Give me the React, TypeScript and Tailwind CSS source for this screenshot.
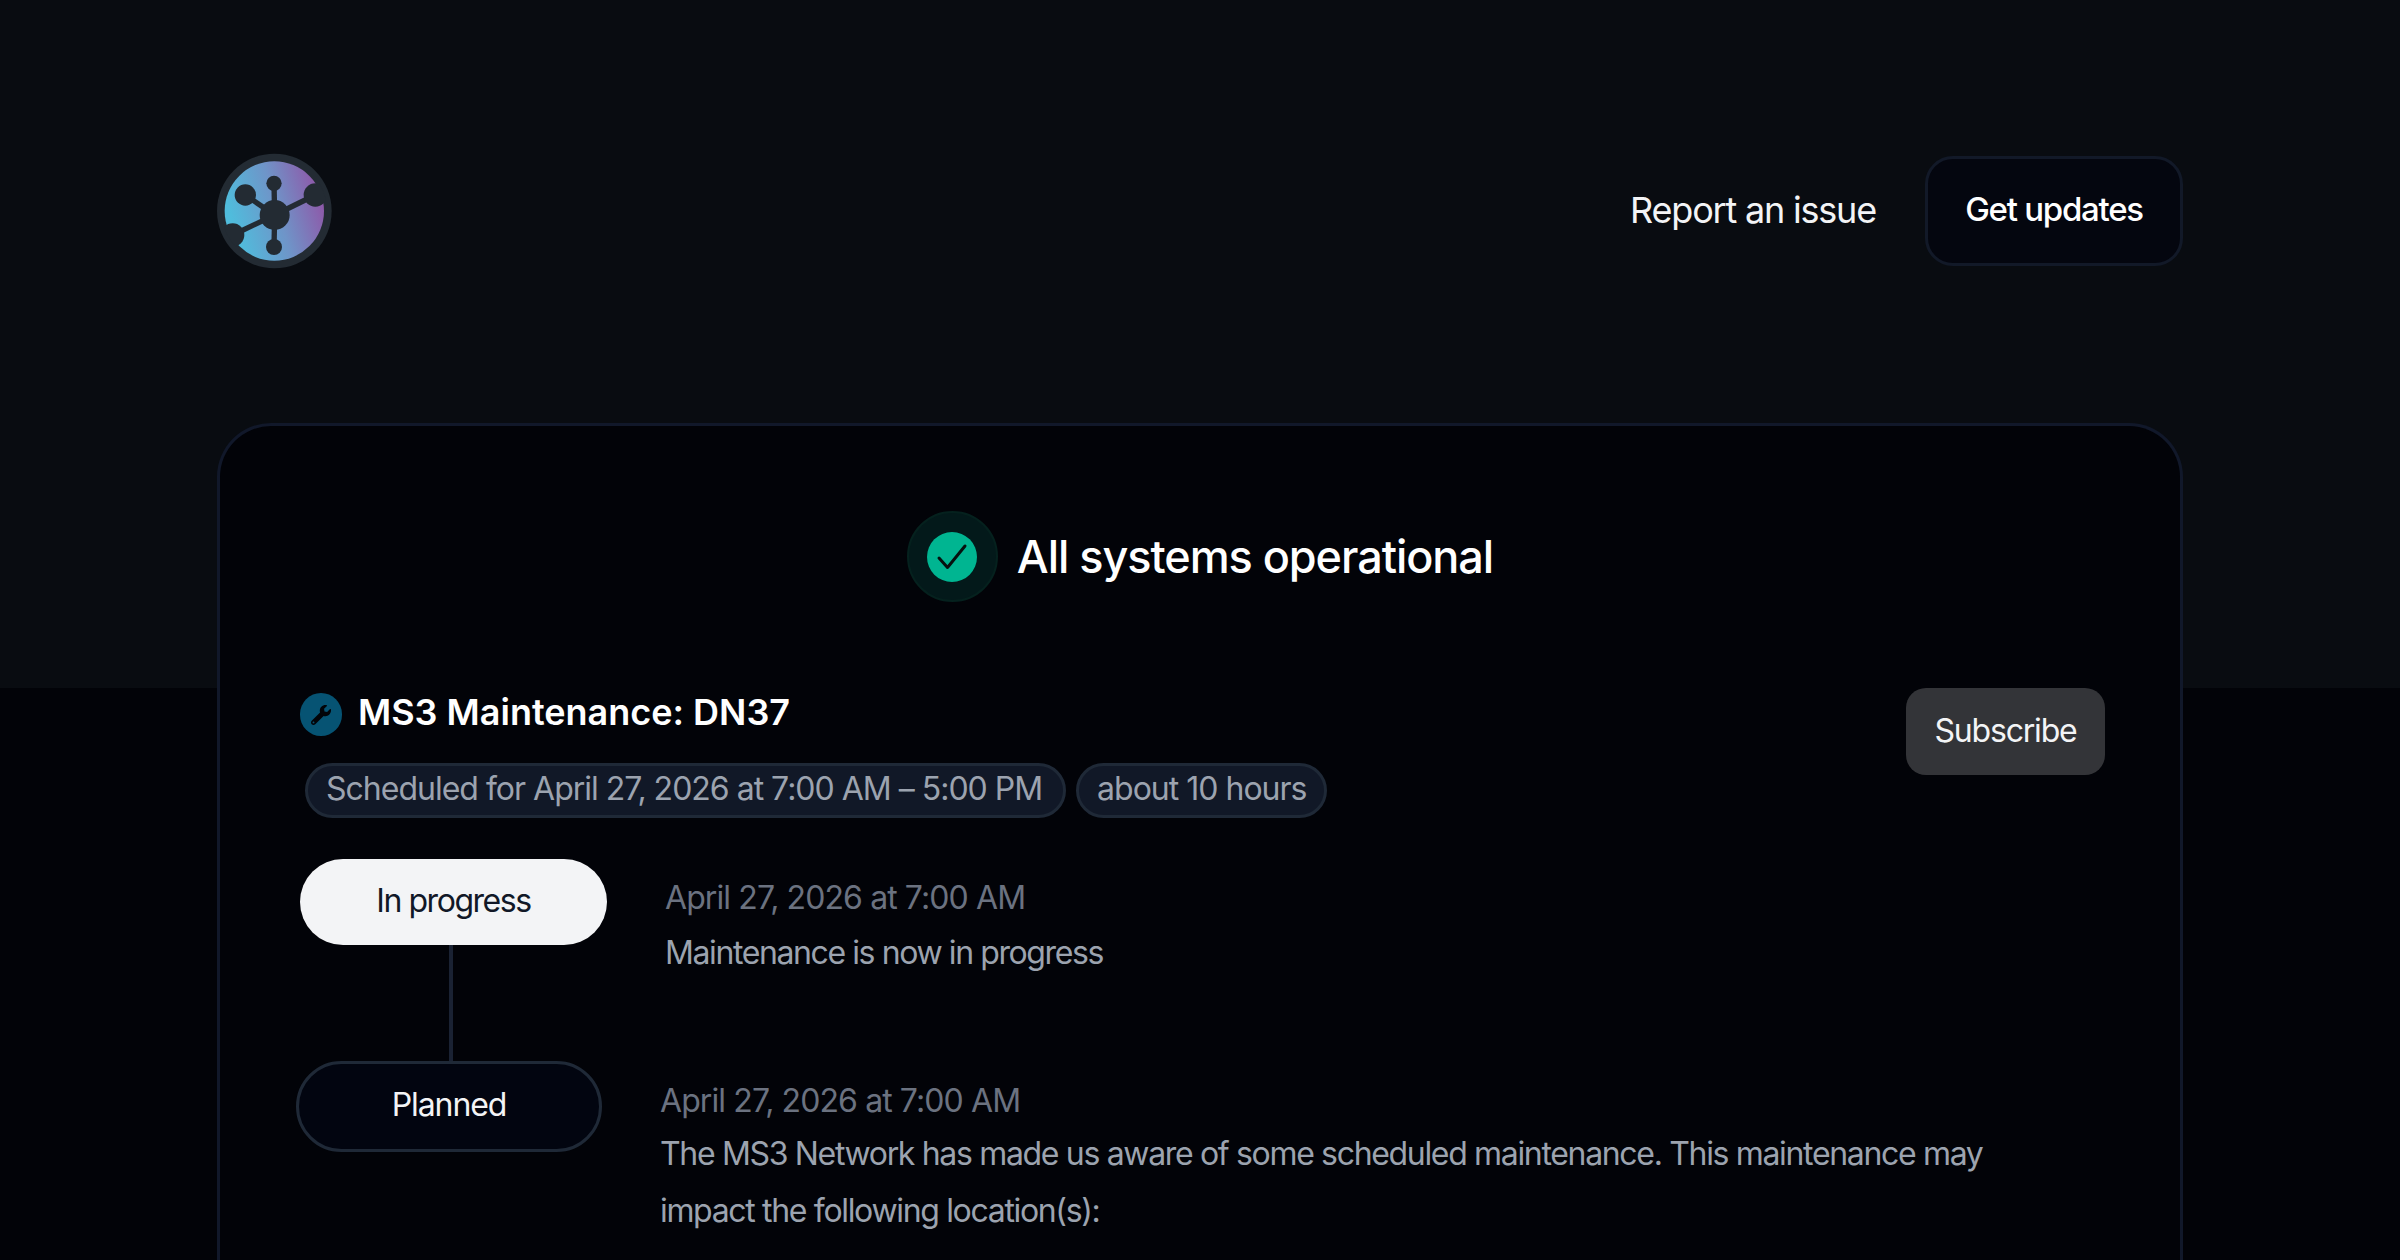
import { FaWrench } from "react-icons/fa";

function Logo() {
  return (
    <svg viewBox="108 100 345 346" className="w-[115px] h-[116px] shrink-0">
      <defs>
        <linearGradient id="lg" x1="0" y1="0.7" x2="1" y2="0.4">
          <stop offset="0.1" stopColor="#50bcdc" />
          <stop offset="0.55" stopColor="#6f94c8" />
          <stop offset="1" stopColor="#8f57a8" />
        </linearGradient>
        <clipPath id="lc">
          <circle cx="280" cy="273" r="158" />
        </clipPath>
      </defs>
      <circle cx="280" cy="273" r="172" fill="#232b33" />
      <circle cx="280" cy="273" r="149" fill="url(#lg)" />
      <g clipPath="url(#lc)" fill="#232b33" stroke="#232b33">
        <g strokeWidth="16">
          <line x1="281" y1="285" x2="279" y2="190" />
          <line x1="281" y1="285" x2="279" y2="381" />
          <line x1="281" y1="285" x2="193" y2="225" />
          <line x1="281" y1="285" x2="155" y2="345" />
          <line x1="281" y1="285" x2="403" y2="225" />
        </g>
        <circle cx="281" cy="285" r="45" strokeWidth="0" />
        <circle cx="279" cy="190" r="23" strokeWidth="0" />
        <circle cx="279" cy="381" r="24" strokeWidth="0" />
        <circle cx="193" cy="225" r="32" strokeWidth="0" />
        <circle cx="155" cy="345" r="35" strokeWidth="0" />
        <circle cx="403" cy="225" r="35" strokeWidth="0" />
      </g>
    </svg>
  );
}

export default function App() {
  return (
    <div className="h-[1260px] overflow-hidden bg-[linear-gradient(#090c11_688px,#020308_688px)] px-[217px] pt-[153px] font-['Inter',sans-serif]">
      <header className="flex h-[116px] items-center justify-between">
        <Logo />
        <nav className="flex items-center gap-[49px]">
          <a className="pb-[3px] text-[36px] leading-[44px] tracking-[-1.2px] text-[#f3f4f6]">Report an issue</a>
          <button className="flex h-[110px] w-[258px] items-center justify-center rounded-[28px] border-[3px] border-[#121928] bg-[#04060f] pb-[3px] text-[33px] font-medium tracking-[-1.27px] text-white">
            Get updates
          </button>
        </nav>
      </header>

      <main className="mt-[154px] h-[900px] rounded-t-[54px] border-[3px] border-b-0 border-[#11182a] bg-[#020308] pt-[85px]">
        <div className="flex items-center justify-center gap-[19px]">
          <div className="flex h-[91px] w-[91px] items-center justify-center rounded-full border-2 border-[#05211e] bg-[#03191a]">
            <div className="flex h-[50px] w-[50px] items-center justify-center rounded-full bg-[#00b591]">
              <svg viewBox="0 0 50 50" className="h-[50px] w-[50px]" fill="none" stroke="#06110f" strokeWidth="3" strokeLinecap="round" strokeLinejoin="round">
                <path d="M12 26l8.5 9.5L38 14" />
              </svg>
            </div>
          </div>
          <h1 className="text-[45px] font-medium leading-[56px] tracking-[-1.05px] text-white">All systems operational</h1>
        </div>

        <section className="mt-[86px] flex items-start justify-between pl-[80px] pr-[75px]">
          <div>
            <div className="mt-[5px] flex items-center gap-[16px]">
              <div className="flex h-[43px] w-[42px] items-center justify-center rounded-full bg-[#065373]">
                <FaWrench className="h-[20px] w-[20px] text-[#020308]" />
              </div>
              <h2 className="-mt-[6px] text-[36px] font-semibold leading-[44px] text-white">MS3 Maintenance: DN37</h2>
            </div>
            <div className="ml-[5px] mt-[27px] flex gap-[10px]">
              <span className="flex h-[55px] items-center rounded-full border-[3px] border-[#1f2937] bg-[#111827] pb-[3px] pl-[18px] pr-[21px] text-[32px] tracking-[-1px] text-[#9ca3af]">
                Scheduled for April 27, 2026 at 7:00 AM – 5:00 PM
              </span>
              <span className="flex h-[55px] items-center rounded-full border-[3px] border-[#1f2937] bg-[#111827] pb-[3px] pl-[18px] pr-[18px] text-[32px] tracking-[-1px] text-[#9ca3af]">
                about 10 hours
              </span>
            </div>
          </div>
          <button className="flex h-[87px] w-[199px] items-center justify-center rounded-[20px] bg-[#333438] pb-[2px] text-[32px] tracking-[-1.2px] text-[#f3f4f6]">
            Subscribe
          </button>
        </section>

        <section className="mt-[41px] pl-[80px] pr-[75px]">
          <div className="flex">
            <div className="w-[307px] shrink-0">
              <div className="flex h-[86px] items-center justify-center rounded-full bg-[#f3f4f6] pb-[2px] text-[32px] tracking-[-1.45px] text-[#111827]">
                In progress
              </div>
              <div className="ml-[149px] h-[116px] w-[4px] bg-[#1a2233]" />
            </div>
            <div className="ml-[58px] mt-[13px] text-[32px]">
              <p className="leading-[52px] tracking-[-0.9px] text-[#6b7280]">April 27, 2026 at 7:00 AM</p>
              <p className="mt-[3px] leading-[52px] tracking-[-1.4px] text-[#9ca3af]">Maintenance is now in progress</p>
            </div>
          </div>
          <div className="-ml-[4px] flex">
            <div className="flex h-[91px] w-[306px] shrink-0 items-center justify-center rounded-full border-[3px] border-[#1f2937] bg-[#020510] pb-[3px] text-[32px] tracking-[-1.1px] text-[#f3f4f6]">
              Planned
            </div>
            <div className="ml-[58px] mt-[14px] text-[32px]">
              <p className="leading-[52px] tracking-[-0.9px] text-[#6b7280]">April 27, 2026 at 7:00 AM</p>
              <p className="-mt-[2px] max-w-[1350px] leading-[57px] tracking-[-1.33px] text-[#9ca3af]">
                The MS3 Network has made us aware of some scheduled maintenance. This maintenance may impact the following location(s):
              </p>
            </div>
          </div>
        </section>
      </main>
    </div>
  );
}
